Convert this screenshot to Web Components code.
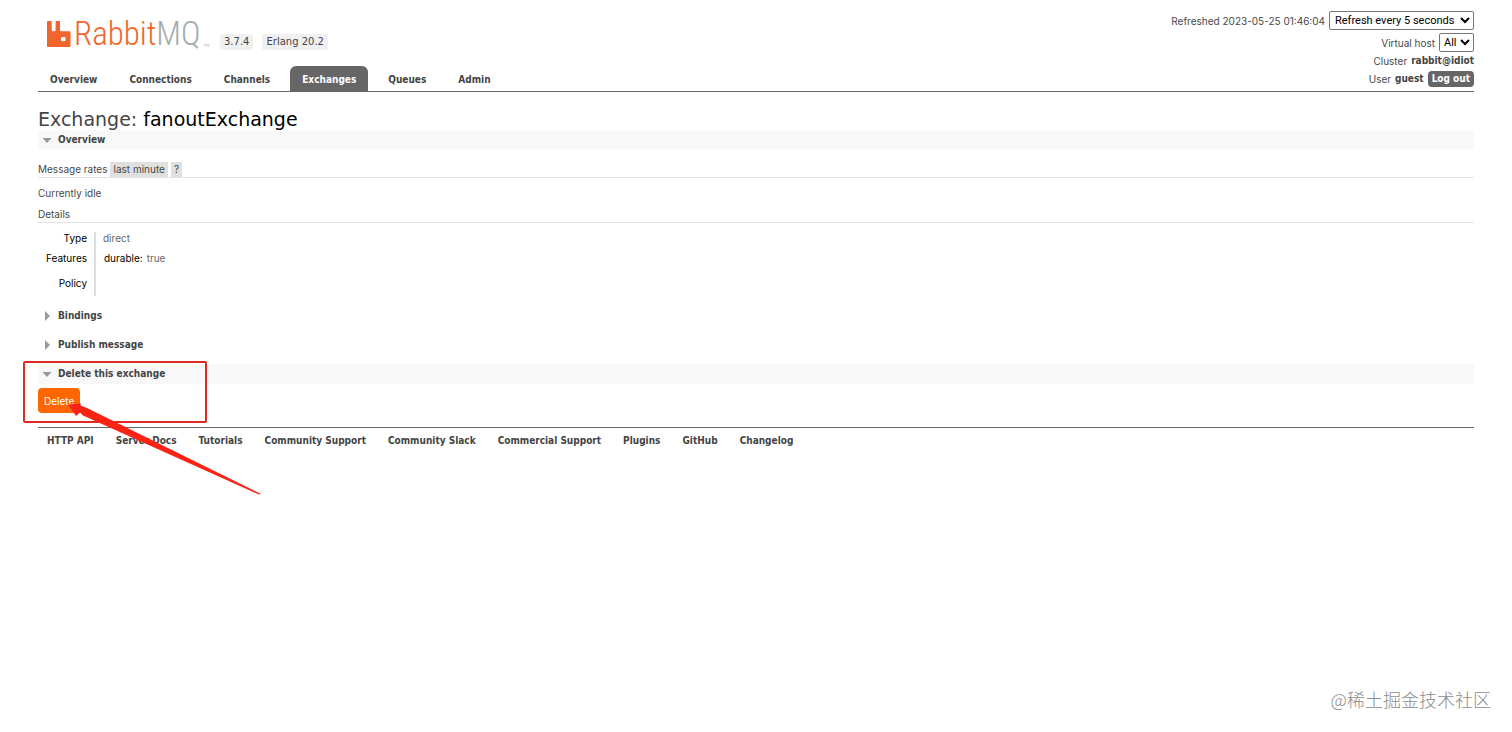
<!DOCTYPE html>
<html lang="en">
<head>
<meta charset="utf-8">
<title>RabbitMQ Management</title>
<style>
  html { height: 100%; }
  body {
    margin: 0; min-height: 100%; box-sizing: border-box; position: relative; background: #fff; color: #484848;
    --bold-face: "DejaVu Sans Condensed", "DejaVu Sans", sans-serif;
    --ink: #444; --rule: #666; --orange: #f60;
    font: 10px/14px Inter, "DejaVu Sans", sans-serif;
  }
</style>
</head>
<body>
<rmq-app></rmq-app>

<script>
const define = (name, html, init) => {
  const template = document.createElement('template');
  template.innerHTML = html;
  customElements.define(name, class extends HTMLElement {
    connectedCallback() {
      if (this.shadowRoot) return;
      this.attachShadow({ mode: 'open' }).append(template.content.cloneNode(true));
      if (init) init(this, this.shadowRoot);
    }
  });
};

define('rmq-logo', `
<style>
  :host { display: block; }
  a { display: flex; align-items: flex-end; gap: 3px; color: #f0652b; text-decoration: none; }
  svg { display: block; margin-bottom: 5px; }
  .word { font: 300 33px/36px "Roboto Condensed", Roboto, sans-serif; }
  .mq { color: #a5acaa; }
  .tm { font: 4px/12px "DejaVu Sans", sans-serif; color: #b5bbb9; }
</style>
<a href="#/">
  <svg width="24" height="26" viewBox="0 0 24 26" aria-hidden="true">
    <path fill="#f0652b" fill-rule="evenodd" d="M.8 0H3.9Q4.7 0 4.7.8V9Q4.7 10.3 6 10.3H7.3Q8.6 10.3 8.6 9V.8Q8.6 0 9.4 0H12.2Q13 0 13 .8V9Q13 10.3 14.3 10.3H22.5Q23.5 10.3 23.5 11.3V25.2Q23.5 26 22.7 26H.8Q0 26 0 25.2V.8Q0 0 .8 0ZM15 16Q14 16 14 17V19.3Q14 20.3 15 20.3H17.5Q18.5 20.3 18.5 19.3V17Q18.5 16 17.5 16Z"/>
  </svg>
  <span class="word">Rabbit<span class="mq">MQ</span></span><span class="tm">TM</span>
</a>`);

define('rmq-badge', `
<style>
  :host { display: inline-block; padding: 1px 4px; border-radius: 3px; background: #f0f0f0; font: 10px/14px "DejaVu Sans", sans-serif; color: var(--ink); }
</style><slot></slot>`);

define('rmq-tab', `
<style>
  :host { display: block; }
  a { display: block; padding: 7px 12px 4px; border-radius: 6px 6px 0 0; font: bold 10px/14px var(--bold-face); color: var(--ink); text-decoration: none; }
  :host([selected]) a { background: #666; color: #fff; }
</style><a href="#"><slot></slot></a>`);

define('rmq-status', `
<style>
  :host { display: flex; flex-direction: column; align-items: flex-end; padding: 11px 0 3px; }
  .row { display: flex; align-items: center; gap: 4px; line-height: 18px; }
  .row:first-of-type { margin-bottom: 3px; }
  select { box-sizing: border-box; height: 19px; margin: 0; padding: 0 1px; border: 1px solid #767676; border-radius: 2px; background: #fff; color: #000; font: 11px Roboto, "Liberation Sans", sans-serif; }
  .every { width: 145px; }
  .host { width: 35px; padding: 0; }
  b { font: bold 10px/14px var(--bold-face); color: var(--ink); }
  button { margin: 0; border: 0; padding: 1px 4px; border-radius: 4px; background: #666; color: #fff; font: bold 10px/14px var(--bold-face); }
</style>
<div class="row"><label for="every">Refreshed 2023-05-25 01:46:04</label><select class="every" id="every"><option>Refresh every 5 seconds</option></select></div>
<div class="row"><label for="vhost">Virtual host</label><select class="host" id="vhost"><option>All</option></select></div>
<div class="row"><span>Cluster</span><b>rabbit@idiot</b></div>
<div class="row"><span>User</span><b>guest</b><button type="button">Log out</button></div>`);

define('rmq-header', `
<style>
  :host { display: flex; justify-content: space-between; border-bottom: 1px solid var(--rule); }
  .left { display: flex; flex-direction: column; justify-content: space-between; }
  .brand { display: flex; align-items: flex-end; gap: 9px; padding: 16px 0 0 9px; }
  rmq-logo { width: 164px; }
  rmq-badge { margin-bottom: 2px; }
  nav { display: flex; gap: 8px; }
</style>
<div class="left">
  <div class="brand"><rmq-logo></rmq-logo><rmq-badge>3.7.4</rmq-badge><rmq-badge>Erlang 20.2</rmq-badge></div>
  <nav aria-label="Main">
    <rmq-tab>Overview</rmq-tab><rmq-tab>Connections</rmq-tab><rmq-tab>Channels</rmq-tab>
    <rmq-tab selected>Exchanges</rmq-tab><rmq-tab>Queues</rmq-tab><rmq-tab>Admin</rmq-tab>
  </nav>
</div>
<rmq-status></rmq-status>`);

define('rmq-section', `
<style>
  :host { display: block; position: relative; margin-bottom: 9px; }
  h2 { margin: 0; }
  button { display: flex; align-items: center; gap: 6px; width: 100%; height: 20px; margin: 0; border: 0; padding: 0 0 0 4px; background: none; color: var(--ink); font: bold 10px/20px var(--bold-face); text-align: left; }
  :host([open]) button { background: #f8f8f8; }
  svg { width: 10px; height: 10px; fill: #999; }
  .down { display: none; }
  :host([open]) .down { display: block; }
  :host([open]) .right { display: none; }
</style>
<h2><button type="button">
  <svg class="down" viewBox="0 0 10 10" aria-hidden="true"><path d="M.5 3h9L5 8z"/></svg>
  <svg class="right" viewBox="0 0 10 10" aria-hidden="true"><path d="M3 0l5 5-5 5z"/></svg>
  <span></span></button></h2>
<slot></slot>`, (host, root) => {
  root.querySelector('span').textContent = host.getAttribute('heading');
  root.querySelector('button').setAttribute('aria-expanded', host.hasAttribute('open'));
});

define('rmq-overview', `
<style>
  :host { display: block; padding-bottom: 1px; }
  h3 { display: flex; gap: 3px; margin: 0; border-bottom: 1px solid #e4e4e4; font: inherit; line-height: 15px; }
  .rates { margin-top: 12px; }
  .chip { padding: 0 3px; background: #e0e0e0; }
  p { margin: 8px 0 7px; }
  table { margin: 9px 0 0 7px; border-collapse: collapse; }
  th, td { padding: 0 7px; vertical-align: middle; line-height: 13px; }
  th { min-width: 42px; padding-left: 0; border-right: 2px solid #ddd; font-weight: normal; text-align: right; color: #000; }
  td { color: #666; }
  tr { height: 26px; }
  tr:first-child { height: 13px; }
  tr:last-child { height: 25px; }
  dl { display: flex; gap: 4px; margin: 0; padding-left: 1px; }
  dt { color: #000; }
  dd { margin: 0; }
</style>
<h3 class="rates">Message rates <span class="chip">last minute</span> <span class="chip">?</span></h3>
<p>Currently idle</p>
<h3>Details</h3>
<table>
  <tr><th scope="row">Type</th><td>direct</td></tr>
  <tr><th scope="row">Features</th><td><dl><dt>durable:</dt><dd>true</dd></dl></td></tr>
  <tr><th scope="row">Policy</th><td></td></tr>
</table>`);

define('rmq-callout', `
<style>
  :host { display: block; position: absolute; top: -3px; left: -15px; pointer-events: none; }
  svg { display: block; width: 240px; height: 136px; }
</style>
<svg viewBox="0 0 240 136" aria-hidden="true">
  <rect x="1" y="1" width="182" height="60" rx="1" fill="none" stroke="#e02a1f" stroke-width="2"/>
  <path fill="#fa2314" d="M45 43.5L58 42.5 57.5 44.5 64 47 238 133 236 133.5 60 54.5 57 51.5 53 55z"/>
</svg>`);

define('rmq-footer', `
<style>
  :host { display: block; border-top: 1px solid var(--rule); }
  nav { display: flex; gap: 22px; padding: 6px 9px; }
  a { font: bold 10px/14px var(--bold-face); color: var(--ink); text-decoration: none; }
</style>
<nav aria-label="Resources">
  <a href="#">HTTP API</a><a href="#">Server Docs</a><a href="#">Tutorials</a><a href="#">Community Support</a>
  <a href="#">Community Slack</a><a href="#">Commercial Support</a><a href="#">Plugins</a><a href="#">GitHub</a><a href="#">Changelog</a>
</nav>`);

define('rmq-watermark', `
<style>
  :host { display: block; position: absolute; right: 21px; bottom: 19px; color: #8c8c8c; font: 300 18px/28px "Noto Sans CJK SC", sans-serif; }
</style><slot></slot>`);

define('rmq-app', `
<style>
  :host { display: block; padding: 0 38px; }
  h1 { margin: 16px 0 0; font: 19px/22px "DejaVu Sans", sans-serif; color: var(--ink); }
  h1 b { font-weight: normal; color: #000; }
  .delete { display: block; margin: 4px 0 14px; border: 0; border-radius: 4px; padding: 0 6px; height: 25px; background: var(--orange); color: #fff; font: inherit; }
</style>
<rmq-header></rmq-header>
<main>
  <h1>Exchange: <b>fanoutExchange</b></h1>
  <rmq-section heading="Overview" open><rmq-overview></rmq-overview></rmq-section>
  <rmq-section heading="Bindings"></rmq-section>
  <rmq-section heading="Publish message"></rmq-section>
  <rmq-section heading="Delete this exchange" open>
    <button class="delete" type="button">Delete</button>
    <rmq-callout></rmq-callout>
  </rmq-section>
</main>
<rmq-footer></rmq-footer>
<rmq-watermark>@稀土掘金技术社区</rmq-watermark>`);
</script>
</body>
</html>
